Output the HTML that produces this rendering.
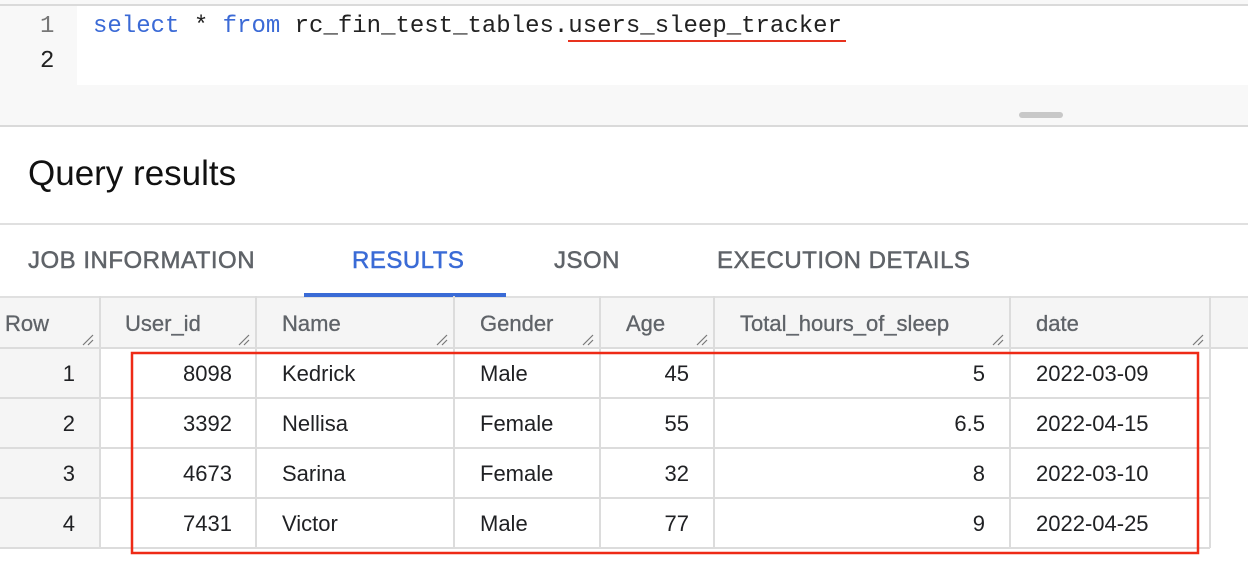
<!DOCTYPE html>
<html><head><meta charset="utf-8"><style>
*{margin:0;padding:0;box-sizing:border-box}
body{width:1248px;height:564px;overflow:hidden;background:#fff;font-family:"Liberation Sans",sans-serif;position:relative}
.a{position:absolute}
.mono{font-family:"Liberation Mono",monospace;font-size:24px}
.tab{font-size:24px;color:#5f6368;top:247px;letter-spacing:0.5px;-webkit-text-stroke:0.5px #5f6368}
.hd{font-size:22px;color:#5f6368;top:311px;-webkit-text-stroke:0.3px #5f6368}
.c{font-size:22px;color:#202124}
</style></head><body>
<div class="a" style="left:0;top:0;width:1248px;height:4px;background:#f8f8f8"></div>
<div class="a" style="left:0;top:4px;width:1248px;height:2px;background:#dadada"></div>
<div class="a" style="left:0;top:6px;width:77px;height:79px;background:#f8f8f8"></div>
<div class="a" style="left:0;top:85px;width:1248px;height:40px;background:#f8f8f8"></div>
<div class="a" style="left:0;top:125px;width:1248px;height:2px;background:#dadada"></div>
<div class="a" style="left:1019px;top:112px;width:44px;height:6px;border-radius:3px;background:#c8c8c8"></div>
<div class="a mono" style="left:40px;top:10px;color:#777;line-height:34px">1</div>
<div class="a mono" style="left:40px;top:45px;color:#222;line-height:34px">2</div>
<div class="a mono" style="left:93px;top:10px;line-height:34px;color:#222;white-space:pre"><span style="color:#3b6ad6">select</span> * <span style="color:#3b6ad6">from</span> rc_fin_test_tables.users_sleep_tracker</div>
<div class="a" style="left:568px;top:40px;width:278px;height:2px;background:#e8321e"></div>
<div class="a" style="left:28px;top:154px;font-size:35px;color:#111">Query results</div>
<div class="a" style="left:0;top:223px;width:1248px;height:2px;background:#e0e0e0"></div>
<div class="a tab" style="left:28px">JOB INFORMATION</div>
<div class="a tab" style="left:352px;color:#3a6bd6;-webkit-text-stroke:0.5px #3a6bd6">RESULTS</div>
<div class="a tab" style="left:554px">JSON</div>
<div class="a tab" style="left:717px">EXECUTION DETAILS</div>
<div class="a" style="left:0;top:296px;width:1248px;height:2px;background:#e0e0e0"></div>
<div class="a" style="left:304px;top:293px;width:202px;height:4px;background:#3a6bd6"></div>
<div class="a" style="left:0;top:298px;width:1248px;height:50px;background:#f5f5f5"></div>
<div class="a" style="left:0;top:348px;width:100px;height:200px;background:#f5f5f5"></div>
<svg class="a" style="left:0;top:296px" width="1248" height="268">
<g stroke="#dcdcdc" stroke-width="2">
<line x1="0" y1="52" x2="1248" y2="52"/>
<line x1="0" y1="102" x2="1210" y2="102"/>
<line x1="0" y1="152" x2="1210" y2="152"/>
<line x1="0" y1="202" x2="1210" y2="202"/>
<line x1="0" y1="252" x2="1210" y2="252"/>
<line x1="100" y1="0" x2="100" y2="252"/>
<line x1="256" y1="0" x2="256" y2="252"/>
<line x1="454" y1="0" x2="454" y2="252"/>
<line x1="600" y1="0" x2="600" y2="252"/>
<line x1="714" y1="0" x2="714" y2="252"/>
<line x1="1010" y1="0" x2="1010" y2="252"/>
<line x1="1210" y1="0" x2="1210" y2="252"/>
</g>
<g stroke="#777" stroke-width="1.2">
<path d="M83 49l10-10M88 49l5-5"/>
<path d="M239 49l10-10M244 49l5-5"/>
<path d="M437 49l10-10M442 49l5-5"/>
<path d="M583 49l10-10M588 49l5-5"/>
<path d="M697 49l10-10M702 49l5-5"/>
<path d="M993 49l10-10M998 49l5-5"/>
<path d="M1193 49l10-10M1198 49l5-5"/>
</g>
<rect x="132" y="57" width="1066" height="200" fill="none" stroke="#ee2a16" stroke-width="2.5"/>
</svg>
<div class="a hd" style="left:5px">Row</div>
<div class="a hd" style="left:125px">User_id</div>
<div class="a hd" style="left:282px">Name</div>
<div class="a hd" style="left:480px">Gender</div>
<div class="a hd" style="left:626px">Age</div>
<div class="a hd" style="left:740px">Total_hours_of_sleep</div>
<div class="a hd" style="left:1036px">date</div>
<div class="a" style="left:0;top:361px;width:1248px">
<div class="a c" style="right:1173px;top:0">1</div><div class="a c" style="right:1016px;top:0">8098</div><div class="a c" style="left:282px;top:0">Kedrick</div><div class="a c" style="left:480px;top:0">Male</div><div class="a c" style="right:559px;top:0">45</div><div class="a c" style="right:263px;top:0">5</div><div class="a c" style="left:1036px;top:0">2022-03-09</div>
<div class="a c" style="right:1173px;top:50px">2</div><div class="a c" style="right:1016px;top:50px">3392</div><div class="a c" style="left:282px;top:50px">Nellisa</div><div class="a c" style="left:480px;top:50px">Female</div><div class="a c" style="right:559px;top:50px">55</div><div class="a c" style="right:263px;top:50px">6.5</div><div class="a c" style="left:1036px;top:50px">2022-04-15</div>
<div class="a c" style="right:1173px;top:100px">3</div><div class="a c" style="right:1016px;top:100px">4673</div><div class="a c" style="left:282px;top:100px">Sarina</div><div class="a c" style="left:480px;top:100px">Female</div><div class="a c" style="right:559px;top:100px">32</div><div class="a c" style="right:263px;top:100px">8</div><div class="a c" style="left:1036px;top:100px">2022-03-10</div>
<div class="a c" style="right:1173px;top:150px">4</div><div class="a c" style="right:1016px;top:150px">7431</div><div class="a c" style="left:282px;top:150px">Victor</div><div class="a c" style="left:480px;top:150px">Male</div><div class="a c" style="right:559px;top:150px">77</div><div class="a c" style="right:263px;top:150px">9</div><div class="a c" style="left:1036px;top:150px">2022-04-25</div>
</div>
</body></html>
